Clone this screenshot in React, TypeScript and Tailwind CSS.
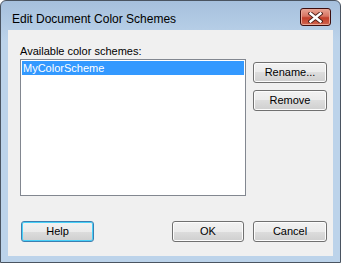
import React from 'react'

const font = { fontFamily: '"Liberation Sans", Arial, sans-serif' }

function Btn({ label, w = 'w-[74px]', focused = false }: { label: string; w?: string; focused?: boolean }) {
  return (
    <div
      className={`${w} h-[21px] rounded-[3px] border ${
        focused ? 'border-[#3c7fb1] shadow-[inset_0_0_0_1px_#48d0f8]' : 'border-[#707070] shadow-[inset_0_0_0_1px_#fcfcfc]'
      } bg-[linear-gradient(to_bottom,#f2f2f2_0%,#ebebeb_50%,#dddddd_50%,#cfcfcf_100%)] flex items-center justify-center text-[11px] text-black`}
    >
      {label}
    </div>
  )
}

export default function App() {
  return (
    <div style={font} className="w-[341px] h-[263px] bg-white">
      <div className="w-[341px] h-[263px] flex flex-col rounded-t-[6px] border border-[#4a5461] bg-[linear-gradient(to_bottom,#a6c0dd_0px,#bcd3ea_40px,#bcd3ea_100%)] overflow-hidden">
        {/* title bar */}
        <div className="h-[29px] flex items-start shrink-0">
          <span className="ml-[11px] mt-[10px] text-[12px] leading-[16px] text-black">Edit Document Color Schemes</span>
          <div className="ml-auto mr-[9px] mt-[7px] w-[31px] h-[18px] rounded-[3px] border border-[#3d0e0e] bg-[linear-gradient(to_bottom,#e8a494_0%,#d87563_45%,#c23f2a_55%,#d0654f_100%)] shadow-[inset_0_0_0_1px_#e9a595] flex items-center justify-center">
            <svg width="15" height="11" viewBox="0 0 15 11">
              <path d="M2.5 1.5 L12.5 9.5 M12.5 1.5 L2.5 9.5" stroke="#4a1d16" strokeWidth="4.2" strokeLinecap="square" />
              <path d="M2.5 1.5 L12.5 9.5 M12.5 1.5 L2.5 9.5" stroke="#ffffff" strokeWidth="2.4" strokeLinecap="square" />
            </svg>
          </div>
        </div>
        {/* client */}
        <div className="mx-[7px] h-[226px] bg-[#f0f0f0] shrink-0 flex flex-col text-[11px] text-black">
          <div className="ml-[12px] mt-[14px] h-[15px] leading-[14px]">Available color schemes:</div>
          <div className="flex">
            <div className="ml-[12px] w-[226px] h-[137px] border border-[#828790] bg-white p-px">
              <div className="h-[14px] bg-[#3399ff] text-white pl-[1px] leading-[14px]">MyColorScheme</div>
            </div>
            <div className="ml-[7px] mt-[3px] flex flex-col gap-[7px]">
              <Btn label="Rename..." />
              <Btn label="Remove" />
            </div>
          </div>
          <div className="mt-[25px] flex">
            <div className="ml-[13px]">
              <Btn label="Help" w="w-[73px]" focused />
            </div>
            <div className="ml-[78px]">
              <Btn label="OK" w="w-[72px]" />
            </div>
            <div className="ml-[9px]">
              <Btn label="Cancel" />
            </div>
          </div>
        </div>
      </div>
    </div>
  )
}
